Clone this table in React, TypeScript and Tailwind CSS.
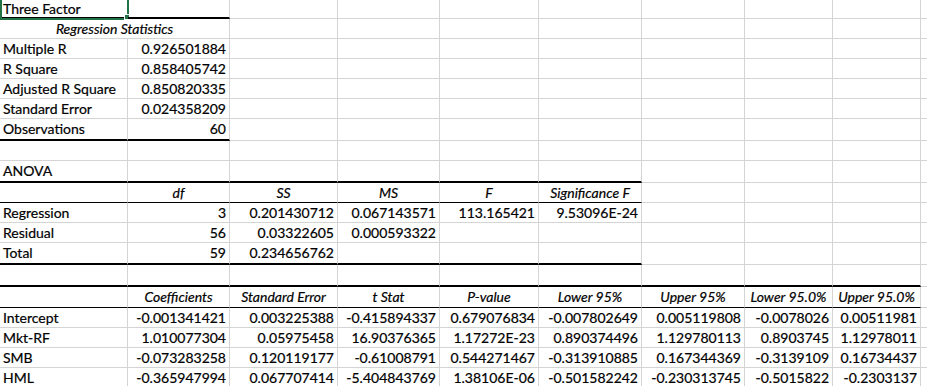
import React from 'react';

type Align = 'l' | 'r' | 'c';
type Edge = 'grid' | 'thin' | 'thick';

interface CellDef {
  t?: string;
  a?: Align;
  i?: boolean;
  b?: Edge;
  span?: number;
}

interface RowDef {
  h: string;
  cells: CellDef[];
}

const alignClass: Record<Align, string> = {
  l: 'justify-start',
  r: 'justify-end',
  c: 'justify-center',
};

const edgeClass: Record<Edge, string> = {
  grid: 'border-b border-b-[#d4d4d4]',
  thin: 'border-b border-b-black',
  thick: 'border-b-2 border-b-black',
};

// build a row of 10 columns: the table part gets the edge, the rest is plain grid
const fill = (cells: CellDef[], edge: Edge = 'grid'): CellDef[] => {
  const used = cells.reduce((n, c) => n + (c.span ?? 1), 0);
  const out = cells.map((c) => ({ b: edge, ...c }));
  for (let k = used; k < 10; k++) out.push({ b: 'grid' });
  return out;
};

const num = (vals: string[]): CellDef[] => vals.map((t) => ({ t, a: 'r' as Align }));
const heads = (vals: string[]): CellDef[] => vals.map((t) => ({ t, a: 'c' as Align, i: true }));

const rows: RowDef[] = [
  { h: 'h-[19px]', cells: fill([{ t: 'Three Factor' }, {}], 'thick') },
  { h: 'h-[20px]', cells: fill([{ t: 'Regression Statistics', a: 'c', i: true, span: 2 }]) },
  { h: 'h-[20px]', cells: fill([{ t: 'Multiple R' }, ...num(['0.926501884'])]) },
  { h: 'h-[20px]', cells: fill([{ t: 'R Square' }, ...num(['0.858405742'])]) },
  { h: 'h-[20px]', cells: fill([{ t: 'Adjusted R Square' }, ...num(['0.850820335'])]) },
  { h: 'h-[20px]', cells: fill([{ t: 'Standard Error' }, ...num(['0.024358209'])]) },
  { h: 'h-[22px]', cells: fill([{ t: 'Observations' }, ...num(['60'])], 'thick') },
  { h: 'h-[20px]', cells: fill([]) },
  { h: 'h-[22px]', cells: fill([{ t: 'ANOVA' }, {}, {}, {}, {}, {}], 'thick') },
  { h: 'h-[20px]', cells: fill([{}, ...heads(['df', 'SS', 'MS', 'F', 'Significance F'])], 'thin') },
  { h: 'h-[20px]', cells: fill([{ t: 'Regression' }, ...num(['3', '0.201430712', '0.067143571', '113.165421', '9.53096E-24'])]) },
  { h: 'h-[20px]', cells: fill([{ t: 'Residual' }, ...num(['56', '0.03322605', '0.000593322']), {}, {}]) },
  { h: 'h-[22px]', cells: fill([{ t: 'Total' }, ...num(['59', '0.234656762']), {}, {}, {}], 'thick') },
  { h: 'h-[22px]', cells: fill([{}, {}, {}, {}, {}, {}, {}, {}, {}], 'thick') },
  {
    h: 'h-[21px]',
    cells: fill(
      [{}, ...heads(['Coefficients', 'Standard Error', 't Stat', 'P-value', 'Lower 95%', 'Upper 95%', 'Lower 95.0%', 'Upper 95.0%'])],
      'thin'
    ),
  },
  {
    h: 'h-[20px]',
    cells: fill([
      { t: 'Intercept' },
      ...num(['-0.001341421', '0.003225388', '-0.415894337', '0.679076834', '-0.007802649', '0.005119808', '-0.0078026', '0.00511981']),
    ]),
  },
  {
    h: 'h-[20px]',
    cells: fill([
      { t: 'Mkt-RF' },
      ...num(['1.010077304', '0.05975458', '16.90376365', '1.17272E-23', '0.890374496', '1.129780113', '0.8903745', '1.12978011']),
    ]),
  },
  {
    h: 'h-[20px]',
    cells: fill([
      { t: 'SMB' },
      ...num(['-0.073283258', '0.120119177', '-0.61008791', '0.544271467', '-0.313910885', '0.167344369', '-0.3139109', '0.16734437']),
    ]),
  },
  {
    h: 'h-[20px]',
    cells: fill([
      { t: 'HML' },
      ...num(['-0.365947994', '0.067707414', '-5.404843769', '1.38106E-06', '-0.501582242', '-0.230313745', '-0.5015822', '-0.2303137']),
    ]),
  },
];

const Cell: React.FC<{ c: CellDef; first: boolean }> = ({ c, first }) => (
  <div
    className={`relative flex items-center px-[3px] border-r border-r-[#d4d4d4] whitespace-nowrap ${
      alignClass[c.a ?? 'l']
    } ${edgeClass[c.b ?? 'grid']} ${c.span === 2 ? 'col-span-2' : ''} ${c.i ? 'italic' : ''}`}
  >
    {c.t}
    {first && (
      <>
        {/* active cell frame */}
        <div className="absolute left-0 top-[-2px] w-[129px] h-[22px] border-2 border-[#217346] pointer-events-none"></div>
        <div className="absolute right-[-3px] bottom-[-3px] w-[6px] h-[6px] bg-[#217346] border border-white"></div>
      </>
    )}
  </div>
);

export default function App() {
  return (
    <div
      className="w-[927px] h-[386px] overflow-hidden bg-white text-black text-[14px] leading-none [-webkit-text-stroke:0.2px_#000]"
      style={{ fontFamily: 'Lato, "Open Sans", sans-serif' }}
    >
      {rows.map((r, ri) => (
        <div
          key={ri}
          className={`grid grid-cols-[128px_102px_108px_102px_99px_103px_103px_88px_88px_1fr] ${r.h}`}
        >
          {r.cells.map((c, ci) => (
            <Cell key={ci} c={c} first={ri === 0 && ci === 0} />
          ))}
        </div>
      ))}
    </div>
  );
}
